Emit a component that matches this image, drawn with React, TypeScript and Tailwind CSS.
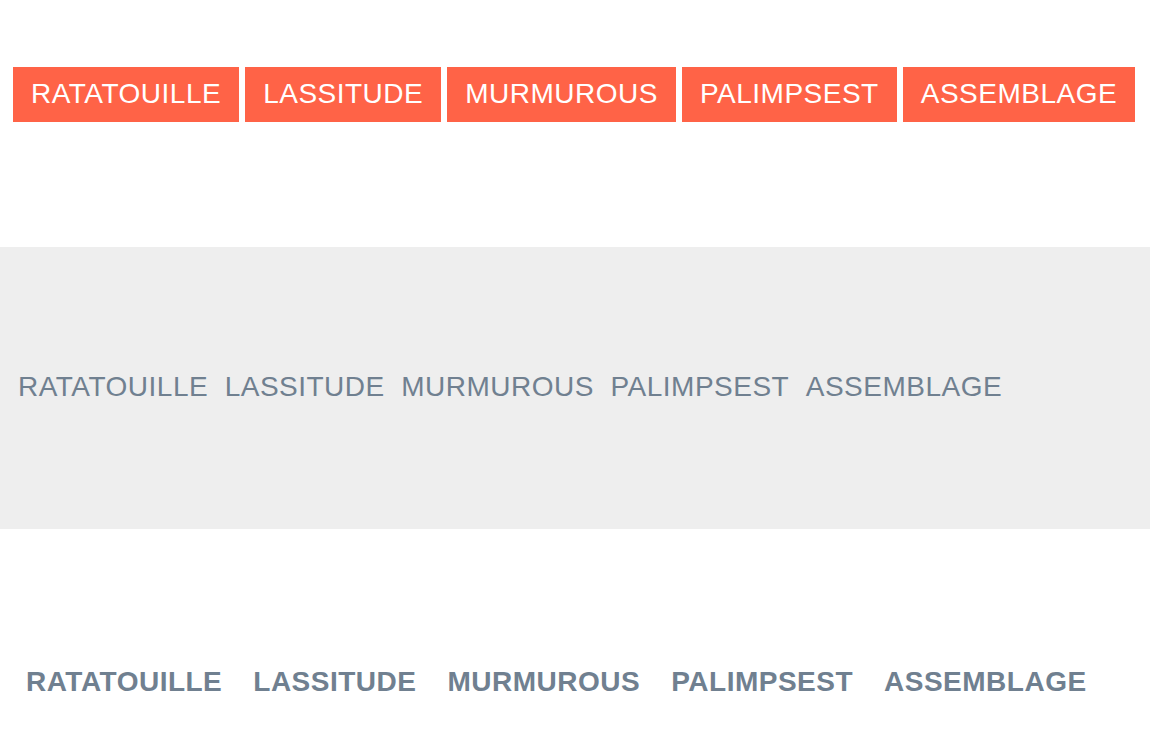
const WORDS = ["RATATOUILLE", "LASSITUDE", "MURMUROUS", "PALIMPSEST", "ASSEMBLAGE"];

const App = () => {
  return (
    <div className="min-h-[745px] bg-white font-['Liberation_Sans',Arial,sans-serif] text-[28px] leading-8 tracking-[0.5px]">
      {/* solid tag buttons */}
      <section className="flex gap-[6px] pl-[13px] pt-[67px] pb-[125px]">
        {WORDS.map((w) => (
          <span
            key={w}
            className="flex h-[55px] items-center bg-[#ff6347] px-[18px] pb-[2px] text-white"
          >
            {w}
          </span>
        ))}
      </section>

      {/* plain text row on grey band */}
      <section className="flex h-[282px] items-center gap-[16.5px] bg-[#eeeeee] pl-[18px] pb-[2px] text-[#708090]">
        {WORDS.map((w) => (
          <span key={w}>{w}</span>
        ))}
      </section>

      {/* bold text row */}
      <section className="flex gap-[31px] pl-[26px] pt-[137px] font-bold text-[#708090]">
        {WORDS.map((w) => (
          <span key={w}>{w}</span>
        ))}
      </section>
    </div>
  );
};

export default App;
